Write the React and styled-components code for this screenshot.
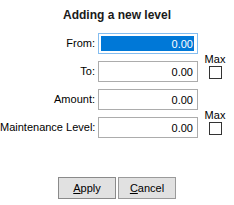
import React from "react";
import styled, { createGlobalStyle } from "styled-components";

const GlobalStyle = createGlobalStyle`
  html, body {
    margin: 0;
    padding: 0;
    background: #ffffff;
  }
  body {
    font-family: "Liberation Sans", Arial, sans-serif;
    color: #000000;
  }
`;

const Dialog = styled.div`
  width: 234px;
  height: 205px;
  padding-top: 8px;
  box-sizing: border-box;
  display: flex;
  flex-direction: column;
`;

const Title = styled.div`
  font-size: 12px;
  font-weight: bold;
  line-height: 14px;
  text-align: center;
  color: #1a1a1a;
`;

const Form = styled.div`
  margin-top: 11px;
  display: grid;
  grid-template-columns: 98px 100px 27px;
  grid-auto-rows: 21px;
  row-gap: 7px;
`;

const Label = styled.div`
  font-size: 11px;
  line-height: 21px;
  text-align: right;
  padding-right: 3px;
  white-space: nowrap;
`;

const Field = styled.div`
  box-sizing: border-box;
  height: 21px;
  border: 1px solid ${(p) => (p.$focused ? "#84bdf0" : "#acacac")};
  background: #ffffff;
  display: flex;
  align-items: stretch;
  justify-content: flex-end;
  padding: ${(p) => (p.$focused ? "2px 3px 2px 2px" : "0 4px 0 0")};
`;

const Value = styled.span`
  flex: ${(p) => (p.$selected ? 1 : "none")};
  display: flex;
  align-items: center;
  justify-content: flex-end;
  font-size: 11px;
  padding-right: ${(p) => (p.$selected ? "1px" : "0")};
  background: ${(p) => (p.$selected ? "#0078d7" : "transparent")};
  color: ${(p) => (p.$selected ? "#ffffff" : "#000000")};
`;

const CheckCell = styled.div`
  margin-left: 7px;
  margin-top: -7px;
  display: flex;
  flex-direction: column;
  align-items: center;
  gap: 1px;
`;

const MaxLabel = styled.span`
  font-size: 11px;
  line-height: 11px;
`;

const Box = styled.span`
  display: block;
  width: 13px;
  height: 13px;
  box-sizing: border-box;
  border: 1px solid #333333;
  background: #ffffff;
`;

const Buttons = styled.div`
  margin-top: 39px;
  display: flex;
  justify-content: center;
  gap: 2px;
`;

const Button = styled.button`
  width: 58px;
  height: 22px;
  box-sizing: border-box;
  border: 1px solid ${(p) => (p.$default ? "#8a8a8a" : "#9a9a9a")};
  background: #e1e1e1;
  font-family: "Liberation Sans", Arial, sans-serif;
  font-size: 11px;
  color: #000000;
  padding: 0;
  u {
    text-decoration: underline;
  }
`;

const rows = [
  { label: "From:", value: "0.00", focused: true },
  { label: "To:", value: "0.00", max: true },
  { label: "Amount:", value: "0.00" },
  { label: "Maintenance Level:", value: "0.00", max: true },
];

export default function App() {
  return (
    <>
      <GlobalStyle />
      <Dialog>
        <Title>Adding a new level</Title>
        <Form>
          {rows.map((r) => (
            <React.Fragment key={r.label}>
              <Label>{r.label}</Label>
              <Field $focused={r.focused}>
                <Value $selected={r.focused}>{r.value}</Value>
              </Field>
              {r.max ? (
                <CheckCell>
                  <MaxLabel>Max</MaxLabel>
                  <Box />
                </CheckCell>
              ) : (
                <div />
              )}
            </React.Fragment>
          ))}
        </Form>
        <Buttons>
          <Button $default>
            <u>A</u>pply
          </Button>
          <Button>
            <u>C</u>ancel
          </Button>
        </Buttons>
      </Dialog>
    </>
  );
}
